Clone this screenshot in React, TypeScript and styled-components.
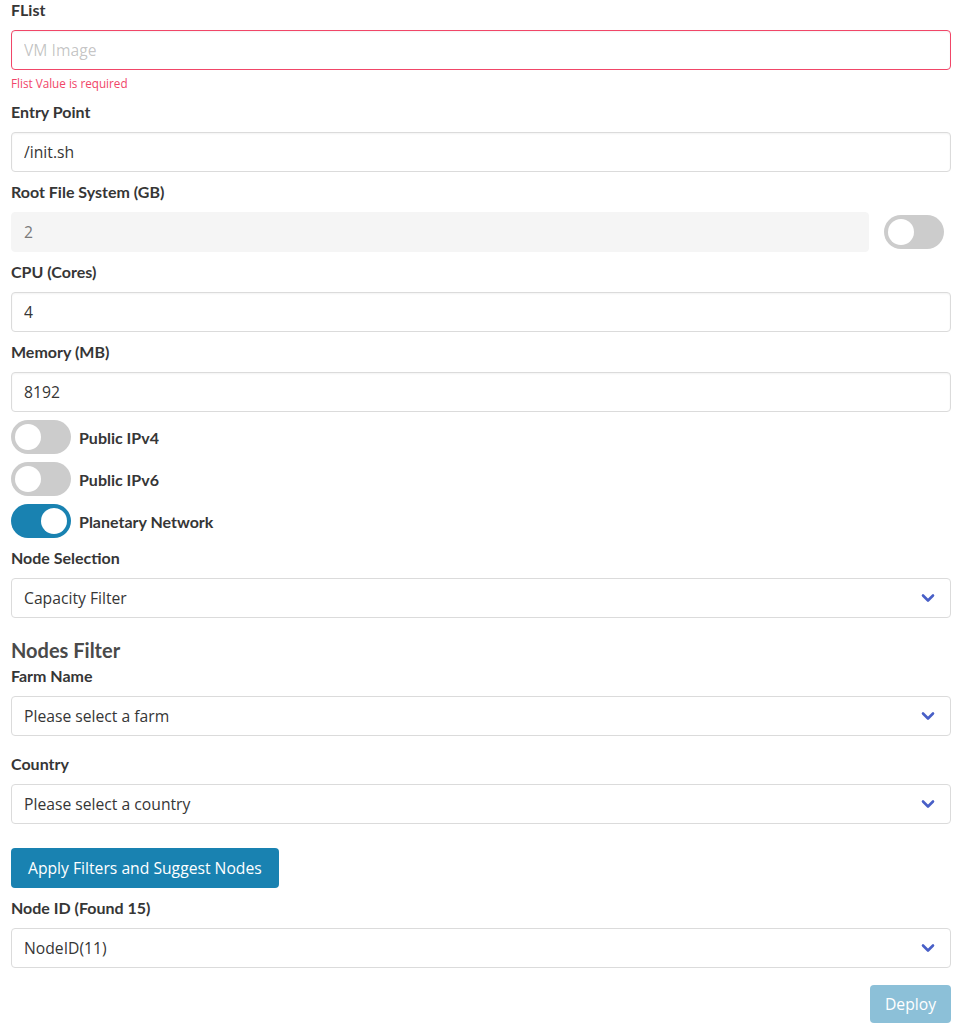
import React from "react";
import styled, { createGlobalStyle } from "styled-components";

const Global = createGlobalStyle`
  html, body {
    margin: 0;
    padding: 0;
    background: #ffffff;
  }
  * {
    box-sizing: border-box;
  }
`;

const Form = styled.form`
  width: 940px;
  margin: -2px 0 0 11px;
  font-family: "Open Sans", "Noto Sans", sans-serif;
  color: #363636;
`;

const Field = styled.div<{ $gap?: number }>`
  margin-bottom: ${(p) => (p.$gap ?? 8)}px;
`;

const Label = styled.label`
  display: block;
  margin-bottom: 8px;
  font-family: Lato, "Liberation Sans", sans-serif;
  font-weight: 700;
  font-size: 16px;
  line-height: 24px;
  color: #363636;
`;

const Input = styled.input<{ $error?: boolean }>`
  display: block;
  width: 100%;
  height: 40px;
  padding: 0 12px;
  border: 1px solid ${(p) => (p.$error ? "#f14668" : "#dbdbdb")};
  border-radius: 4px;
  font-family: "Open Sans", "Noto Sans", sans-serif;
  font-size: 15.7px;
  color: #363636;
  background: #ffffff;
  box-shadow: inset 0 0.0625em 0.125em rgba(10, 10, 10, 0.05);
  outline: none;

  &::placeholder {
    color: rgba(54, 54, 54, 0.3);
  }

  &:disabled {
    background: #f5f5f5;
    border-color: #f5f5f5;
    color: #7a7a7a;
    box-shadow: none;
  }
`;

const Help = styled.p`
  margin: 4px 0 0;
  font-family: "Open Sans", "Noto Sans", sans-serif;
  font-size: 11.7px;
  line-height: 18px;
  color: #f14668;
`;

const InlineRow = styled.div`
  display: flex;
  align-items: center;
  gap: 15px;
  padding-right: 7px;

  > input {
    flex: 1;
  }
`;

const SwitchTrack = styled.span<{ $on: boolean }>`
  position: relative;
  flex: none;
  display: inline-block;
  width: 60px;
  height: 34px;
  border-radius: 34px;
  background: ${(p) => (p.$on ? "#1982b1" : "#cccccc")};

  &::after {
    content: "";
    position: absolute;
    top: 4px;
    left: ${(p) => (p.$on ? "30px" : "4px")};
    width: 26px;
    height: 26px;
    border-radius: 50%;
    background: #ffffff;
  }
`;

const SwitchRow = styled.div`
  display: flex;
  align-items: center;
  gap: 8px;
  margin-bottom: 8px;
  font-family: Lato, "Liberation Sans", sans-serif;
  font-weight: 700;
  font-size: 16px;
  color: #363636;
`;

const SelectBox = styled.div`
  position: relative;
  display: flex;
  align-items: center;
  height: 40px;
  padding: 0 40px 0 12px;
  border: 1px solid #dbdbdb;
  border-radius: 4px;
  font-size: 15.7px;
  color: #363636;
  background: #ffffff;

  > svg {
    position: absolute;
    right: 15px;
    top: 50%;
    transform: translateY(-50%);
  }
`;

const Heading = styled.h3`
  margin: 0;
  padding-top: 10px;
  font-family: Lato, "Liberation Sans", sans-serif;
  font-weight: 700;
  font-size: 20px;
  line-height: 28px;
  color: #4a4a4a;
`;

const Button = styled.button<{ $faded?: boolean }>`
  height: ${(p) => (p.$faded ? 38 : 40)}px;
  padding: 0 ${(p) => (p.$faded ? 15 : 17)}px;
  border: none;
  border-radius: 4px;
  font-family: "Open Sans", "Noto Sans", sans-serif;
  font-size: 15.7px;
  color: #ffffff;
  background: ${(p) => (p.$faded ? "#8cc0d8" : "#1982b1")};
  cursor: pointer;
`;

const Footer = styled.div`
  display: flex;
  justify-content: flex-end;
  padding-top: 17px;
`;

const Chevron = () => (
  <svg width="14" height="9" viewBox="0 0 14 9" fill="none">
    <path
      d="M2 2l5 5 5-5"
      stroke="#485fc7"
      strokeWidth="2.6"
      strokeLinecap="round"
      strokeLinejoin="round"
    />
  </svg>
);

const Select: React.FC<{ value: string }> = ({ value }) => (
  <SelectBox>
    <span>{value}</span>
    <Chevron />
  </SelectBox>
);

const switches = [
  { label: "Public IPv4", on: false },
  { label: "Public IPv6", on: false },
  { label: "Planetary Network", on: true },
];

export default function App() {
  return (
    <>
      <Global />
      <Form onSubmit={(e) => e.preventDefault()}>
        <Field>
          <Label>FList</Label>
          <Input $error placeholder="VM Image" />
          <Help>Flist Value is required</Help>
        </Field>
        <Field>
          <Label>Entry Point</Label>
          <Input defaultValue="/init.sh" />
        </Field>
        <Field>
          <Label>Root File System (GB)</Label>
          <InlineRow>
            <Input disabled defaultValue="2" />
            <SwitchTrack $on={false} />
          </InlineRow>
        </Field>
        <Field>
          <Label>CPU (Cores)</Label>
          <Input defaultValue="4" />
        </Field>
        <Field>
          <Label>Memory (MB)</Label>
          <Input defaultValue="8192" />
        </Field>
        {switches.map((s) => (
          <SwitchRow key={s.label}>
            <SwitchTrack $on={s.on} />
            {s.label}
          </SwitchRow>
        ))}
        <Field>
          <Label>Node Selection</Label>
          <Select value="Capacity Filter" />
        </Field>
        <Heading>Nodes Filter</Heading>
        <Field $gap={16}>
          <Label>Farm Name</Label>
          <Select value="Please select a farm" />
        </Field>
        <Field $gap={24}>
          <Label>Country</Label>
          <Select value="Please select a country" />
        </Field>
        <Field>
          <Button type="button">Apply Filters and Suggest Nodes</Button>
        </Field>
        <Field $gap={0}>
          <Label>Node ID (Found 15)</Label>
          <Select value="NodeID(11)" />
        </Field>
        <Footer>
          <Button type="button" $faded>
            Deploy
          </Button>
        </Footer>
      </Form>
    </>
  );
}
